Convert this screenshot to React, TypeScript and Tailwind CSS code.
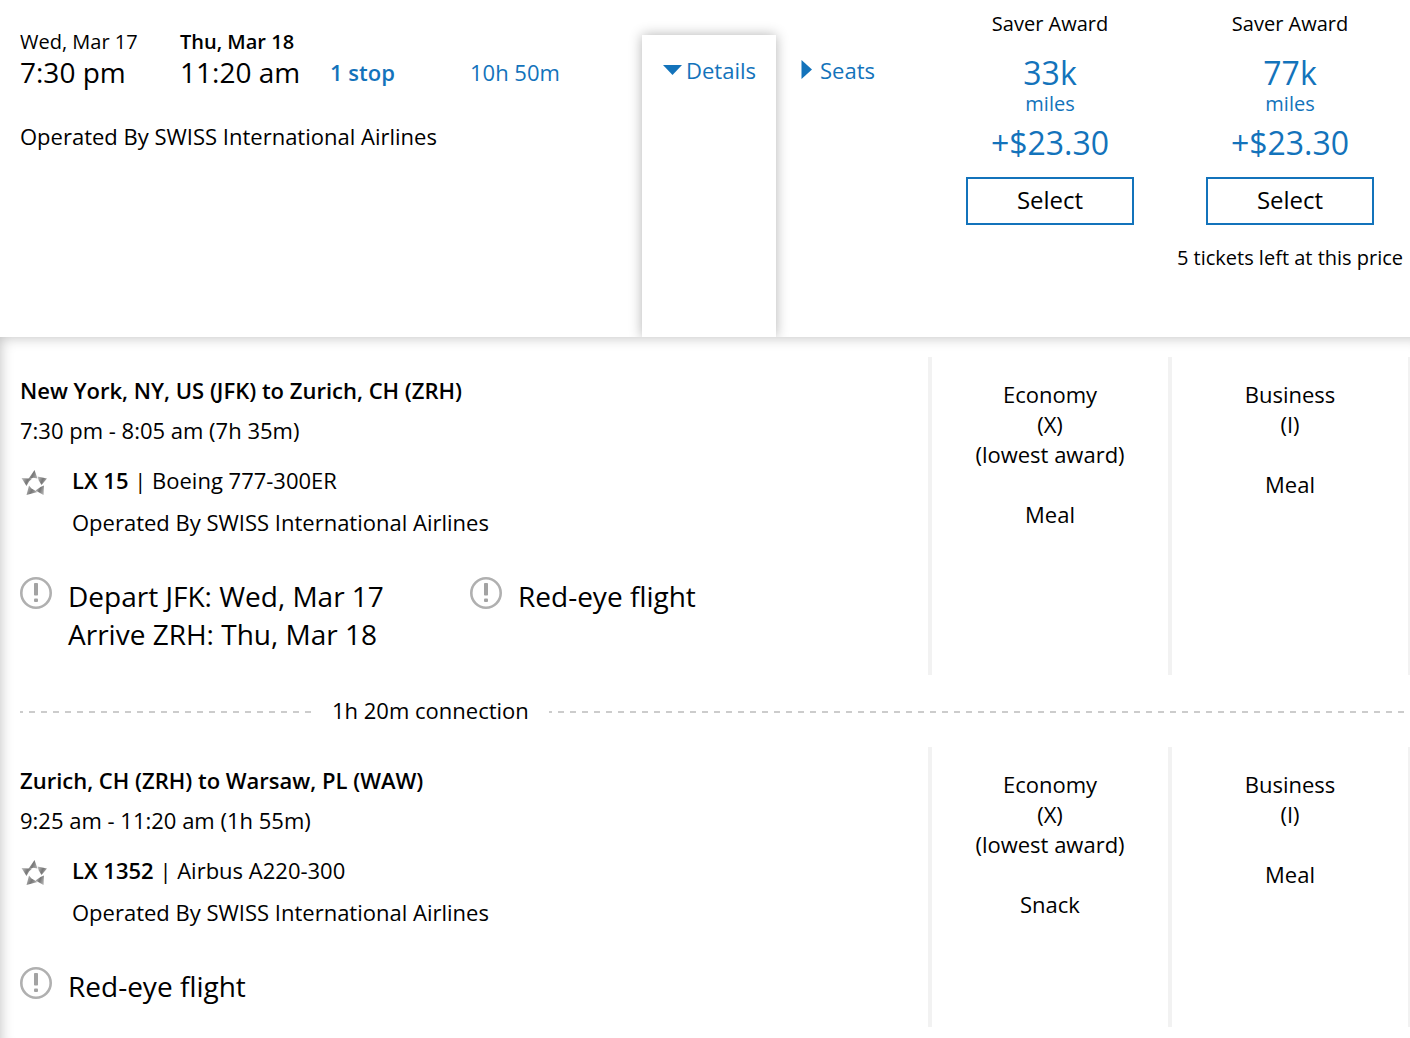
type Fare = {
  cabin: string;
  code: string;
  note?: string;
  meal: string;
};

type Segment = {
  route: string;
  times: string;
  flight: string;
  aircraft: string;
  alerts: string[][];
  fares: Fare[];
};

const awards = [
  { name: "Saver Award", miles: "33k", fee: "+$23.30", left: "" },
  { name: "Saver Award", miles: "77k", fee: "+$23.30", left: "5 tickets left at this price" },
];

const segments: Segment[] = [
  {
    route: "New York, NY, US (JFK) to Zurich, CH (ZRH)",
    times: "7:30 pm - 8:05 am (7h 35m)",
    flight: "LX 15",
    aircraft: "Boeing 777-300ER",
    alerts: [["Depart JFK: Wed, Mar 17", "Arrive ZRH: Thu, Mar 18"], ["Red-eye flight"]],
    fares: [
      { cabin: "Economy", code: "(X)", note: "(lowest award)", meal: "Meal" },
      { cabin: "Business", code: "(I)", meal: "Meal" },
    ],
  },
  {
    route: "Zurich, CH (ZRH) to Warsaw, PL (WAW)",
    times: "9:25 am - 11:20 am (1h 55m)",
    flight: "LX 1352",
    aircraft: "Airbus A220-300",
    alerts: [["Red-eye flight"]],
    fares: [
      { cabin: "Economy", code: "(X)", note: "(lowest award)", meal: "Snack" },
      { cabin: "Business", code: "(I)", meal: "Meal" },
    ],
  },
];

// five shaded blades around a pentagon
function StarIcon() {
  return (
    <svg viewBox="0 0 28 28" className="w-7 h-7 shrink-0" aria-hidden="true">
      <defs>
        <linearGradient id="blade" x1="0" y1="0" x2="1" y2="0.4">
          <stop offset="0" stopColor="#c4c4c4" />
          <stop offset="0.6" stopColor="#777" />
          <stop offset="1" stopColor="#a8a8a8" />
        </linearGradient>
      </defs>
      <g fill="url(#blade)">
        <path d="M14.500 1L17.500 9.500L13.500 8.800L8 10.500Z" />
        <path d="M27 9.500L17.500 7.500L18.800 11.500L21.500 16Z" />
        <path d="M23.500 26L24 16.500L20.500 18L15.500 21.500Z" />
        <path d="M6.500 26L9 16.500L11.500 19.500L17.500 23Z" />
        <path d="M1.500 9L12 9.800L9 12.500L6.500 17Z" />
      </g>
    </svg>
  );
}

function AlertIcon() {
  return (
    <svg viewBox="0 0 32 32" className="w-8 h-8 shrink-0" aria-hidden="true">
      <circle cx="16" cy="16" r="14.7" fill="none" stroke="#b0b0b0" strokeWidth="2.6" />
      <rect x="14" y="6" width="4" height="12.5" rx="0.8" fill="#a3a3a3" />
      <rect x="14" y="21.5" width="4" height="3.5" rx="1" fill="#a3a3a3" />
    </svg>
  );
}

function DashedLine({ className }: { className: string }) {
  return (
    <div
      className={`h-[2px] bg-[repeating-linear-gradient(90deg,#ccc_0px_3px,transparent_3px_9px,#ccc_9px_12px)] ${className}`}
    />
  );
}

function Connection({ label }: { label: string }) {
  return (
    <div className="flex items-center h-[72px] pl-5 gap-5 text-[22px] leading-[30px]">
      <DashedLine className="w-[292px] mt-[2px]" />
      <span className="pb-[2px]">{label}</span>
      <DashedLine className="flex-1 mt-[2px]" />
    </div>
  );
}

function FlightSegment({ segment }: { segment: Segment }) {
  return (
    <article className="flex text-[22px] leading-[30px]">
      <div className="flex-1 min-w-0 pl-5 pt-[18px] pb-[22px]">
        <h3 className="font-semibold">{segment.route}</h3>
        <p className="mt-[10px]">{segment.times}</p>
        <div className="flex mt-5 gap-6">
          <div className="pt-1">
            <StarIcon />
          </div>
          <div>
            <p>
              <span className="font-semibold">{segment.flight}</span> | {segment.aircraft}
            </p>
            <p className="mt-3">Operated By SWISS International Airlines</p>
          </div>
        </div>
        <ul className="flex mt-10 text-[28px] leading-[38px]">
          {segment.alerts.map((lines) => (
            <li key={lines[0]} className="flex gap-4 w-[450px]">
              <AlertIcon />
              <div>
                {lines.map((line) => (
                  <p key={line}>{line}</p>
                ))}
              </div>
            </li>
          ))}
        </ul>
      </div>
      <div className="flex shrink-0 border-r-2 border-[#f2f2f2]">
        {segment.fares.map((fare) => (
          <div key={fare.cabin} className="w-[240px] pt-[22px] border-l-4 border-[#f2f2f2] text-center">
            <p>{fare.cabin}</p>
            <p>{fare.code}</p>
            {fare.note && <p>{fare.note}</p>}
            <p className="mt-[30px]">{fare.meal}</p>
          </div>
        ))}
      </div>
    </article>
  );
}

function App() {
  return (
    <main className="bg-white text-black overflow-hidden font-['Open_Sans',sans-serif]">
      <header className="flex h-[337px] text-[22px] leading-[30px]">
        <div className="flex-1 min-w-0 pl-5 pt-[31px]">
          <div className="flex items-end">
            <div className="w-40">
              <p className="text-xl leading-[22px]">Wed, Mar 17</p>
              <p className="text-[28px] leading-[38px]">7:30 pm</p>
            </div>
            <div className="w-[150px]">
              <p className="text-xl leading-[22px] font-semibold">Thu, Mar 18</p>
              <p className="text-[28px] leading-[38px]">11:20 am</p>
            </div>
            <a href="#stops" className="w-[140px] pb-1 font-semibold text-[#1373bb]">
              1 stop
            </a>
            <a href="#duration" className="pb-1 text-[#1373bb]">
              10h 50m
            </a>
          </div>
          <p className="mt-[30px]">Operated By SWISS International Airlines</p>
        </div>

        <div className="w-[134px] mt-[35px] pt-5 bg-white shadow-[0_0_12px_rgba(0,0,0,0.3)]">
          <button type="button" className="flex items-center gap-1 mx-auto text-[#1373bb]" aria-expanded="true">
            <svg viewBox="0 0 20 12" className="w-5 h-3" fill="#1373bb" aria-hidden="true">
              <path d="M1 1h19L10.500 11z" />
            </svg>
            Details
          </button>
        </div>
        <div className="w-[154px] pt-[55px] pl-6">
          <button type="button" className="flex items-center gap-2 text-[#1373bb]" aria-expanded="false">
            <svg viewBox="0 0 12 20" className="w-3 h-5" fill="#1373bb" aria-hidden="true">
              <path d="M1.500 0v19L12 9.500z" />
            </svg>
            Seats
          </button>
        </div>

        {awards.map((award) => (
          <div key={award.miles} className="w-[240px] pt-2 flex flex-col items-center text-xl">
            <p className="leading-8">{award.name}</p>
            <p className="mt-[13px] text-[32px] leading-10 text-[#1373bb]">{award.miles}</p>
            <p className="leading-[22px] text-[#1373bb]">miles</p>
            <p className="mt-2 text-[32px] leading-10 text-[#1373bb]">{award.fee}</p>
            <button
              type="button"
              className="w-[168px] h-12 mt-[14px] pb-[2px] border-2 border-[#1373bb] bg-white text-2xl"
            >
              Select
            </button>
            {award.left && <p className="mt-5 leading-[26px]">{award.left}</p>}
          </div>
        ))}
      </header>

      <section className="relative bg-white pt-5 pb-[11px] shadow-[inset_7px_7px_14px_-7px_rgba(0,0,0,0.26)]">
        <FlightSegment segment={segments[0]} />
        <Connection label="1h 20m connection" />
        <FlightSegment segment={segments[1]} />
      </section>
    </main>
  );
}

export default App;
